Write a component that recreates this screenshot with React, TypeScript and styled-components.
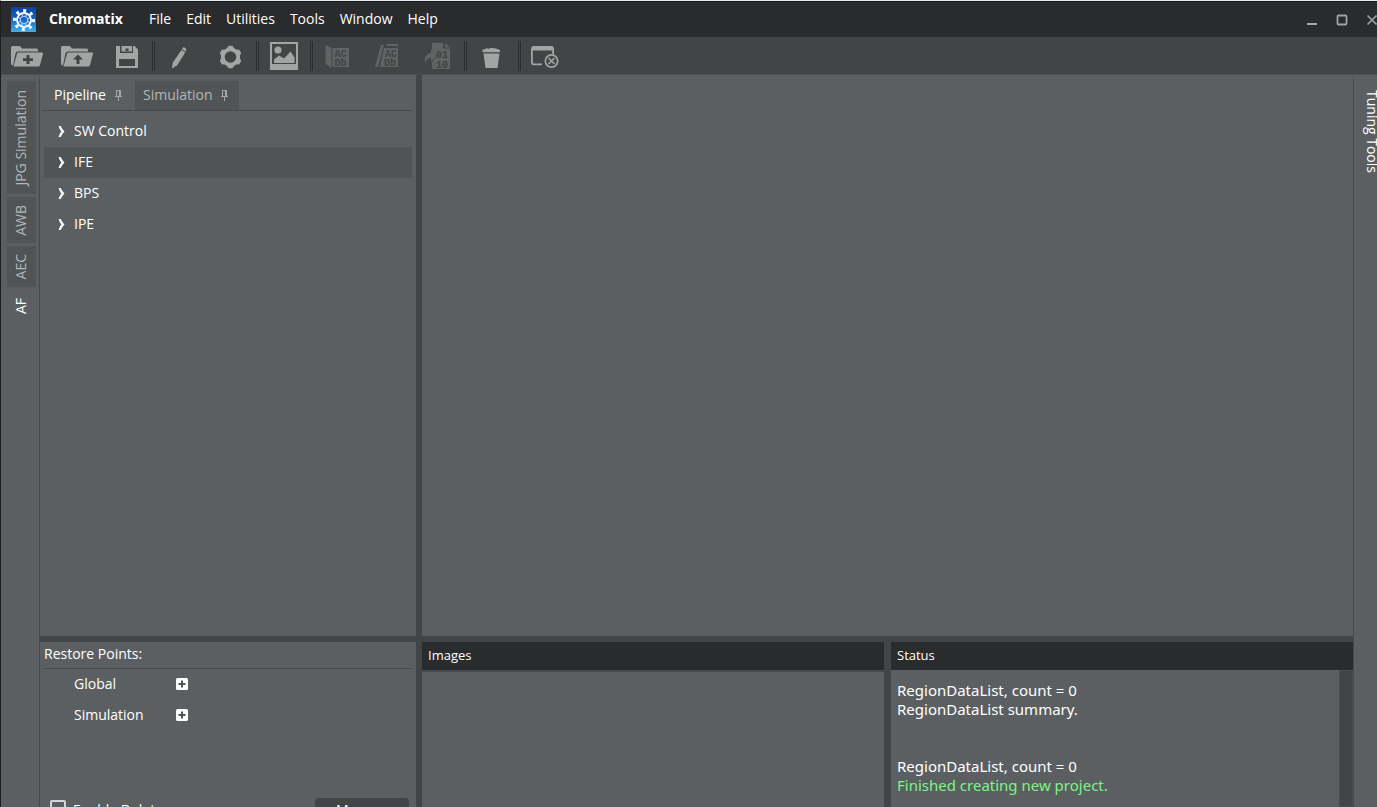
import React from "react";
import styled, { createGlobalStyle } from "styled-components";

const c = {
  title: "#2a2b2d",
  bar: "#414545",
  panel: "#5b5f62",
  tab: "#505454",
  line: "#464a4a",
  icon: "#a3a5a5",
  dim: "#5f6363",
  text: "#ffffff",
  muted: "#b4b6b7",
  green: "#7cf582",
};

const Global = createGlobalStyle`
  * { box-sizing: border-box; }
  body { margin: 0; background: ${c.panel}; overflow: hidden; }
  button { font: inherit; color: inherit; background: none; border: 0; padding: 0; }
`;

const Window = styled.div`
  display: flex;
  flex-direction: column;
  height: 100vh;
  overflow: hidden;
  border-top: 1px solid #e6eeee;
  border-left: 1px solid #1c1d1e;
  background: ${c.panel};
  color: ${c.text};
  font: 14px/20px "Open Sans", "Noto Sans", sans-serif;
`;

const TitleBar = styled.header`
  display: flex;
  align-items: center;
  flex: none;
  height: 36px;
  padding-left: 10px;
  border-top: 1px solid #151617;
  background: ${c.title};
`;

const AppName = styled.strong`
  width: 88px;
  margin-left: 13px;
  padding-bottom: 2px;
  font-weight: 700;
`;

const Menu = styled.nav`
  display: flex;
  flex: 1;
  gap: 15px;
  margin-left: 12px;
  padding-bottom: 2px;
`;

const WindowButtons = styled.div`
  display: flex;
  margin-right: -10px;
`;

const WindowButton = styled.button`
  display: flex;
  align-items: center;
  justify-content: center;
  width: 30px;
  height: 34px;
`;

const ToolBar = styled.div`
  display: flex;
  flex: none;
  height: 38px;
  background: ${c.bar};
  border-bottom: 1px solid #4b4f50;
`;

const ToolButton = styled.button<{ $dim?: boolean }>`
  display: flex;
  align-items: center;
  justify-content: center;
  width: 50px;
  color: ${(p) => (p.$dim ? c.dim : c.icon)};
`;

const Separator = styled.span`
  width: 4px;
  height: 30px;
  margin-top: 4px;
  border-right: 1px solid #2c2e2f;
  background: linear-gradient(90deg, transparent 1px, #2c2e2f 1px 2px, transparent 2px);
`;

const Body = styled.div`
  display: flex;
  flex: 1;
  min-height: 0;
`;

const Rail = styled.div`
  display: flex;
  flex-direction: column;
  flex: none;
  gap: 3px;
  width: 39px;
  margin-top: 2px;
  padding: 4px 3px 0 6px;
  border-right: 1px solid ${c.line};
`;

const RailTab = styled.button<{ $h: number; $active?: boolean }>`
  display: flex;
  align-items: center;
  justify-content: center;
  width: 29px;
  height: ${(p) => p.$h}px;
  padding-right: 2px;
  background: ${(p) => (p.$active ? "transparent" : c.tab)};
  color: ${(p) => (p.$active ? c.text : c.muted)};
  span {
    writing-mode: vertical-rl;
    transform: rotate(180deg);
    white-space: nowrap;
  }
`;

const Work = styled.main`
  display: grid;
  flex: 1;
  min-width: 0;
  grid-template-columns: 376px minmax(0, 1fr);
  grid-template-rows: minmax(0, 1fr) 165px;
  gap: 6px;
  background: ${c.bar};
`;

const Pane = styled.section`
  min-width: 0;
  min-height: 0;
  overflow: hidden;
  background: ${c.panel};
`;

const Tabs = styled.div`
  display: flex;
  margin: 6px 4px 0 2px;
  border-bottom: 1px solid ${c.line};
`;

const Tab = styled.button<{ $active?: boolean }>`
  display: flex;
  align-items: center;
  justify-content: space-between;
  width: ${(p) => (p.$active ? 93 : 104)}px;
  height: 29px;
  padding: 0 ${(p) => (p.$active ? 13 : 11)}px 2px ${(p) => (p.$active ? 12 : 8)}px;
  background: ${(p) => (p.$active ? "transparent" : c.tab)};
  color: ${(p) => (p.$active ? c.text : c.muted)};
  svg { margin-top: 2px; }
`;

const Tree = styled.div`
  margin: 5px 4px 0;
`;

const TreeRow = styled.button<{ $hot?: boolean }>`
  display: flex;
  align-items: center;
  gap: 8px;
  width: 100%;
  height: 31px;
  padding-left: 13px;
  padding-bottom: 2px;
  background: ${(p) => (p.$hot ? c.tab : "transparent")};
`;

const Restore = styled(Pane)`
  padding: 0 4px;
`;

const RestoreTitle = styled.h2`
  height: 27px;
  margin: 0;
  padding-top: 2px;
  border-bottom: 1px solid ${c.line};
  font: inherit;
`;

const RestoreRow = styled.div`
  display: flex;
  align-items: center;
  height: 31px;
  padding-left: 30px;
  padding-bottom: 1px;
  span { width: 102px; }
  button { display: flex; }
`;

const RestoreFooter = styled.div`
  display: flex;
  align-items: flex-start;
  justify-content: space-between;
  margin-top: 67px;
  padding: 0 3px 0 6px;
`;

const CheckLabel = styled.label`
  display: flex;
  align-items: flex-start;
  gap: 7px;
  padding-top: 2px;
`;

const Check = styled.input`
  appearance: none;
  width: 16px;
  height: 16px;
  margin: 0;
  border: 2px solid #d4d5d6;
  border-radius: 2px;
`;

const ManageButton = styled.button`
  && {
    width: 94px;
    height: 26px;
    padding-bottom: 2px;
    border-radius: 4px;
    background: ${c.bar};
  }
`;

const BottomRight = styled.div`
  display: grid;
  grid-template-columns: minmax(0, 1fr) minmax(0, 1fr);
  gap: 7px;
  min-height: 0;
`;

const Dock = styled(Pane)`
  display: flex;
  flex-direction: column;
`;

const DockTitle = styled.h2`
  flex: none;
  height: 28px;
  margin: 0;
  padding: 0 6px;
  background: ${c.title};
  font: 13px/26px "Open Sans", "Noto Sans", sans-serif;
`;

const DockBody = styled.div<{ $ruled?: boolean }>`
  display: flex;
  flex: 1;
  min-height: 0;
  border-top: ${(p) => (p.$ruled ? `2px solid ${c.line}` : "0")};
`;

const Log = styled.div`
  flex: 1;
  padding: 11px 6px 0;
  font-family: "Noto Sans", "Open Sans", sans-serif;
  font-size: 15px;
  line-height: 19px;
  p { margin: 0; min-height: 19px; }
`;

const Good = styled.p`
  color: ${c.green};
`;

const ScrollTrack = styled.div`
  width: 14px;
  background: ${c.bar};
  border: 1px solid #4b4f50;
`;

const RightRail = styled.aside`
  flex: none;
  width: 24px;
  margin-top: 2px;
  padding: 13px 0 0 8px;
  border-left: 1px solid ${c.line};
  overflow: hidden;
  button {
    writing-mode: vertical-rl;
    white-space: nowrap;
  }
`;

const Tool = ({ children }: { children: React.ReactNode }) => (
  <svg width="34" height="31" viewBox="0 0 34 31" fill="currentColor" aria-hidden="true">
    {children}
  </svg>
);

const Folder = ({ mark }: { mark: string }) => (
  <Tool>
    <path d="M2 7.500Q2 6 3.500 6H10q1 0 1.600.8L13 8.500h14.500q1.500 0 1.500 1.500v1.500H9q-2 0-2.500 2L4 25.500Q2 25.500 2 23.500z" />
    <path d="M9.500 12.500H33q1.300 0 1 1.300L31 25q-.4 1.500-2 1.500H4.500L8 13.800q.4-1.300 1.500-1.300z" />
    <path d={mark} fill={c.bar} />
  </Tool>
);

const Pin = () => (
  <svg width="7" height="11" viewBox="0 0 7 11" fill="none" stroke="#a6a8a9" aria-hidden="true">
    <path d="M1.500 6V.5h4V6M4.500 1v5M0 6.500h7M3.500 7v4" />
  </svg>
);

const Chevron = () => (
  <svg width="9" height="12" viewBox="0 0 9 12" fill="#f4f4f4" aria-hidden="true">
    <path d="M1.500 1h2.200Q5 3.800 7.300 6.200v.6Q5 9.200 3.700 12H1.500Q2.300 9 4.300 6.500 2.300 4 1.500 1z" />
  </svg>
);

const Plus = () => (
  <svg width="12" height="12" viewBox="0 0 12 12" aria-hidden="true">
    <rect width="12" height="12" rx="1.500" fill="#fff" />
    <path d="M6 2.500v7M2.500 6h7" stroke="#505454" strokeWidth="2" />
  </svg>
);

const teeth = [0, 45, 90, 135, 180, 225, 270, 315];

const Logo = () => (
  <svg width="25" height="25" viewBox="0 0 25 25" aria-hidden="true">
    <defs>
      <linearGradient id="sky" x1="0" y1="0" x2="0" y2="1">
        <stop offset="0" stopColor="#0a3fa6" />
        <stop offset="0.500" stopColor="#1766c4" />
        <stop offset="1" stopColor="#3fb3ea" />
      </linearGradient>
    </defs>
    <rect width="25" height="25" fill="url(#sky)" />
    <g transform="translate(13 13)" fill="#f3f8fd">
      {teeth.map((a) => (
        <path key={a} transform={`rotate(${a + 4})`} d="M-1.700-11h3.400l-.5 3.500h-2.400z" />
      ))}
      <circle r="7" fill="none" stroke="#f3f8fd" strokeWidth="1.800" />
      {teeth.map((a) => (
        <path key={a} transform={`rotate(${a + 24})`} d="M-.5-6.500h1L.3-4h-.6z" />
      ))}
      <circle r="3.800" fill="none" stroke="#cfe4f6" strokeWidth="0.900" />
    </g>
  </svg>
);

const drawing = { fontFamily: "Liberation Mono", fontWeight: 700, fontSize: 10 };

export default function App() {
  return (
    <Window>
      <Global />
      <TitleBar>
        <Logo />
        <AppName>Chromatix</AppName>
        <Menu>
          {["File", "Edit", "Utilities", "Tools", "Window", "Help"].map((m) => (
            <button key={m}>{m}</button>
          ))}
        </Menu>
        <WindowButtons>
          <WindowButton aria-label="Minimize">
            <svg width="12" height="12"><path d="M1 10h10" stroke="#a9abac" strokeWidth="2" /></svg>
          </WindowButton>
          <WindowButton aria-label="Maximize">
            <svg width="12" height="12"><rect x="1.500" y="1.500" width="9" height="9" rx="1" fill="none" stroke="#a0a2a3" strokeWidth="1.800" /></svg>
          </WindowButton>
          <WindowButton aria-label="Close">
            <svg width="12" height="12"><path d="M1.500 1.500l9 9M10.500 1.500l-9 9" stroke="#a0a2a3" strokeWidth="1.600" /></svg>
          </WindowButton>
        </WindowButtons>
      </TitleBar>

      <ToolBar>
        <ToolButton aria-label="New project">
          <Folder mark="M17.500 15h3v3.200H24v2.800h-3.500V24h-3v-3H14v-2.800h3.500z" />
        </ToolButton>
        <ToolButton aria-label="Open project">
          <Folder mark="M19 14.500l5 5h-3.500V24h-3v-4.500H14z" />
        </ToolButton>
        <ToolButton aria-label="Save">
          <Tool>
            <path fillRule="evenodd" d="M7 6h4v7h13V6h1.500L29 9.500V28H7zM10 19v7h16v-7z" />
            <path d="M12.500 6h7v2.500h-3V11h3V6H23v5.500H12.500z" />
          </Tool>
        </ToolButton>
        <Separator />
        <ToolButton aria-label="Edit">
          <Tool>
            <path d="M18.500 10l3.800 2.300-8 12.900-5.300 3.300.8-6zM19.300 8.500q1-1.800 2.700-.8t1.200 3l-.4.800-3.800-2.300z" />
          </Tool>
        </ToolButton>
        <ToolButton aria-label="Settings">
          <Tool>
            <g transform="translate(17.500 17)">
              <circle r="7.700" fill="none" stroke="currentColor" strokeWidth="3.800" />
              {[0, 60, 120, 180, 240, 300].map((a) => (
                <path key={a} transform={`rotate(${a})`} d="M-4.500-8q1.500-.5 1.800-2.200.3-1 1.200-1h3q.9 0 1.200 1 .3 1.700 1.800 2.200z" />
              ))}
            </g>
          </Tool>
        </ToolButton>
        <Separator />
        <ToolButton aria-label="Images">
          <Tool>
            <path fillRule="evenodd" d="M3 2h28v28H3zM5 4v20h24V4z" />
            <circle cx="11" cy="10" r="3.600" />
            <path d="M7 23v-3.500l5-4 5 3 6.500-7 4 6V23z" />
          </Tool>
        </ToolButton>
        <Separator />
        <ToolButton $dim aria-label="ACDB file">
          <Tool>
            <path d="M4.500 5l6 3v20l-6-4zM11.500 8H28v19H11.500z" />
            <g fill={c.bar} style={drawing}>
              <text x="13.500" y="17">AC</text>
              <text x="13.500" y="26">Db</text>
            </g>
          </Tool>
        </ToolButton>
        <ToolButton $dim aria-label="Edit ACDB">
          <Tool>
            <path d="M10 5h3L7 27H4zM16 4h11v2H15.500zM13 8h14v19H9z" />
            <g fill={c.bar} style={drawing}>
              <text x="14" y="17">AC</text>
              <text x="13" y="26">Db</text>
            </g>
          </Tool>
        </ToolButton>
        <ToolButton $dim aria-label="Export binary">
          <Tool>
            <path d="M11 3h11v5.500h7V29H11v-7l5-6-5-5zM24 3l5 4.500h-5z" />
            <path d="M10 9l6 6.500-6 6v-4q-4 0-6 6-2-9 6-11z" />
            <g fill={c.bar} style={drawing}>
              <text x="15" y="18">01</text>
              <text x="15" y="28">10</text>
            </g>
          </Tool>
        </ToolButton>
        <Separator />
        <ToolButton aria-label="Delete">
          <Tool>
            <path d="M7.500 9.500l3-.3.500-1.200 3 1 1-1.200 6 .7 4 1.500v2.200H7.500zM8.500 13.500h16l-2 14.500h-12z" />
          </Tool>
        </ToolButton>
        <Separator />
        <ToolButton aria-label="Close window">
          <Tool>
            <path d="M2 9q0-3 3-3h17q3 0 3 3v5h-1.800v-3.500H3.800V22q0 1.500 1.500 1.500H13v1.700H5q-3 0-3-3z" />
            <g fill="none" stroke="currentColor" strokeWidth="1.700">
              <circle cx="22.500" cy="21" r="6.200" />
              <path d="M19.500 18l6 6M25.500 18l-6 6" />
            </g>
          </Tool>
        </ToolButton>
      </ToolBar>

      <Body>
        <Rail>
          <RailTab $h={113}><span>JPG Simulation</span></RailTab>
          <RailTab $h={46}><span>AWB</span></RailTab>
          <RailTab $h={41}><span>AEC</span></RailTab>
          <RailTab $h={33} $active><span>AF</span></RailTab>
        </Rail>

        <Work>
          <Pane>
            <Tabs>
              <Tab $active>Pipeline <Pin /></Tab>
              <Tab>Simulation <Pin /></Tab>
            </Tabs>
            <Tree>
              {["SW Control", "IFE", "BPS", "IPE"].map((n) => (
                <TreeRow key={n} $hot={n === "IFE"}>
                  <Chevron />
                  {n}
                </TreeRow>
              ))}
            </Tree>
          </Pane>
          <Pane />
          <Restore>
            <RestoreTitle>Restore Points:</RestoreTitle>
            {["Global", "Simulation"].map((n) => (
              <RestoreRow key={n}>
                <span>{n}</span>
                <button aria-label={`Add ${n} restore point`}><Plus /></button>
              </RestoreRow>
            ))}
            <RestoreFooter>
              <CheckLabel>
                <Check type="checkbox" />
                Enable Delete
              </CheckLabel>
              <ManageButton>Manage</ManageButton>
            </RestoreFooter>
          </Restore>
          <BottomRight>
            <Dock>
              <DockTitle>Images</DockTitle>
              <DockBody $ruled />
            </Dock>
            <Dock>
              <DockTitle>Status</DockTitle>
              <DockBody>
                <Log>
                  <p>RegionDataList, count = 0</p>
                  <p>RegionDataList summary.</p>
                  <p />
                  <p />
                  <p>RegionDataList, count = 0</p>
                  <Good>Finished creating new project.</Good>
                </Log>
                <ScrollTrack />
              </DockBody>
            </Dock>
          </BottomRight>
        </Work>

        <RightRail>
          <button>Tuning Tools</button>
        </RightRail>
      </Body>
    </Window>
  );
}
